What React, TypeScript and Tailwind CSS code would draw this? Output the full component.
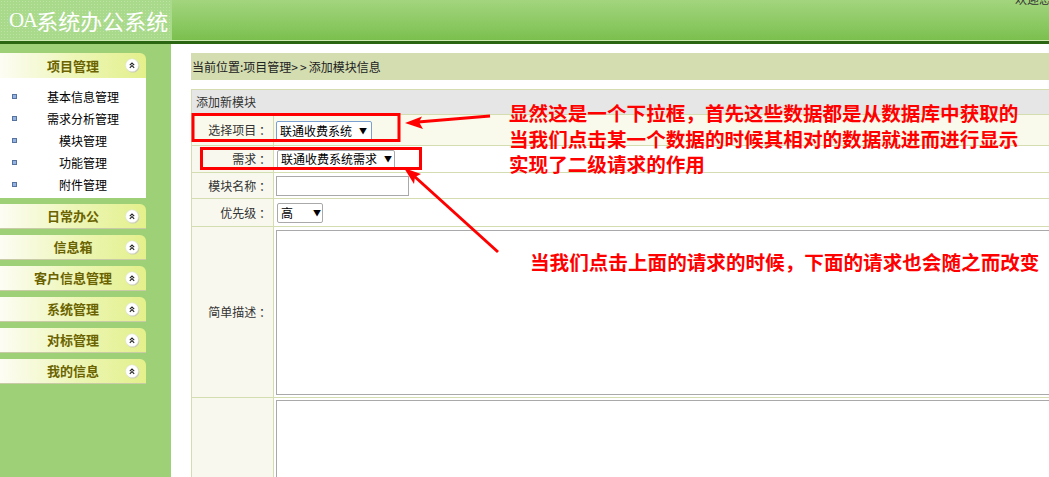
import React from 'react';

const menus = ['日常办公', '信息箱', '客户信息管理', '系统管理', '对标管理', '我的信息'];
const subItems = ['基本信息管理', '需求分析管理', '模块管理', '功能管理', '附件管理'];

const CollapseIcon = () => (
  <svg width="15" height="15" viewBox="0 0 15 15" className="absolute right-[6px] top-[5px]">
    <circle cx="7.8" cy="8" r="6.6" fill="#c9c9b8" />
    <circle cx="7" cy="7.2" r="6.4" fill="#ffffff" stroke="#e2e2d6" strokeWidth="0.6" />
    <path d="M4.8 7.2 L7 5 L9.2 7.2 M4.8 9.8 L7 7.6 L9.2 9.8" fill="none" stroke="#222" strokeWidth="1.1" />
  </svg>
);

const MenuHeader = ({ title, first }: { title: string; first?: boolean }) => (
  <div
    className={`relative flex items-center justify-center rounded-tr-[6px] bg-gradient-to-r from-[#fdfdf4] via-[#eef6b8] to-[#e3f08a] ${first ? 'h-[25px]' : 'mt-[6px] h-[25px] border-b border-[#c9cba6]'}`}
  >
    <span className="text-[13px] font-bold text-[#6a6300]">{title}</span>
    <CollapseIcon />
  </div>
);

const SelectBox = ({ text, className }: { text: string; className: string }) => (
  <div className={`flex items-center gap-[7px] rounded-[2px] border bg-white pl-[3px] text-[12px] text-black ${className}`}>
    <span>{text}</span>
    <span className="text-[8px]">▼</span>
  </div>
);

export default function App() {
  return (
    <div className="relative h-[477px] w-[1049px] overflow-hidden bg-white font-['Noto_Sans_CJK_SC',sans-serif]">
      {/* 顶部 */}
      <div className="flex h-[40px] bg-gradient-to-b from-[#a3d57e] to-[#7bc04e]">
        <div className="flex w-[172px] shrink-0 items-center whitespace-nowrap bg-[#a9d98b] bg-[radial-gradient(#bde3a2_1px,transparent_1px)] bg-[length:3px_3px] pl-[9px]">
          <span className="font-['Liberation_Serif',serif] text-[21px] leading-none tracking-[-1.5px] text-white">OA</span>
          <span className="text-[22px] leading-none text-white">系统办公系统</span>
        </div>
      </div>
      <span className="absolute left-[1015px] top-[-10px] whitespace-nowrap text-[12px] text-[#333]">欢迎您 admin</span>
      <div className="h-px bg-[#cfe9b2]" />
      <div className="h-[3px] bg-[#2b6712]" />

      <div className="flex h-[433px]">
        {/* 左侧菜单 */}
        <div className="w-[171px] shrink-0 bg-[#9dd077] pt-[9px]">
          <div className="w-[146px]">
            <MenuHeader title="项目管理" first />
            <div className="h-[120px] bg-white pt-[8px]">
              {subItems.map((item) => (
                <div key={item} className="relative flex h-[22px] items-center">
                  <span className="absolute left-[12px] top-[8px] h-[5px] w-[5px] border border-[#56729f] bg-[#94b3e2]" />
                  <span className="w-full pl-[20px] text-center text-[12px] text-black">{item}</span>
                </div>
              ))}
            </div>
            {menus.map((m) => (
              <MenuHeader key={m} title={m} />
            ))}
          </div>
        </div>

        {/* 右侧内容 */}
        <div className="min-w-0 flex-1 pl-[20px] pt-[9px]">
          <div className="flex h-[27px] items-center bg-[#d3ddb0] pl-[1px] text-[12px] text-[#222]">
            当前位置:项目管理<span className="tracking-[2px]">&gt;&gt;</span>添加模块信息
          </div>

          <div className="mt-[9px] w-[900px] border-l border-t border-[#d3ddb0] text-[12px] text-[#333]">
            <div className="flex h-[24px] items-center bg-[#e6e6e6] pl-[4px]">添加新模块</div>

            <div className="flex h-[31px] border-t border-[#d3ddb0] bg-[#fafaec]">
              <div className="flex w-[82px] items-center justify-end border-r border-[#d3ddb0] pr-[2px]">选择项目 ：</div>
              <div className="flex items-center pl-[2px] pt-[1px]">
                <SelectBox text="联通收费系统" className="h-[20px] w-[96px] border-[#7aa0d2]" />
              </div>
            </div>

            <div className="flex h-[27px] border-t border-[#d3ddb0]">
              <div className="flex w-[82px] items-center justify-end border-r border-[#d3ddb0] bg-[#f8f8ef] pr-[2px]">需求 ：</div>
              <div className="flex items-center pl-[3px]">
                <SelectBox text="联通收费系统需求" className="h-[19px] w-[118px] border-[#a9a9a9]" />
              </div>
            </div>

            <div className="flex h-[26px] border-t border-[#d3ddb0]">
              <div className="flex w-[82px] items-center justify-end border-r border-[#d3ddb0] bg-[#f8f8ef] pr-[2px]">模块名称 ：</div>
              <div className="flex items-center pl-[2px]">
                <input className="h-[20px] w-[133px] border border-[#a9a9a9] bg-white outline-none" />
              </div>
            </div>

            <div className="flex h-[28px] border-t border-[#d3ddb0]">
              <div className="flex w-[82px] items-center justify-end border-r border-[#d3ddb0] bg-[#f8f8ef] pr-[2px]">优先级 ：</div>
              <div className="flex items-center pl-[3px]">
                <SelectBox text="高" className="h-[20px] w-[46px] gap-[20px] border-[#a9a9a9]" />
              </div>
            </div>

            <div className="flex h-[171px] border-t border-[#d3ddb0]">
              <div className="flex w-[82px] items-center justify-end border-r border-[#d3ddb0] bg-[#f8f8ef] pr-[2px]">简单描述 ：</div>
              <div className="flex-1 pl-[2px] pt-[3px]">
                <textarea className="h-[165px] w-full resize-none border border-[#a9a9a9] bg-white outline-none" />
              </div>
            </div>

            <div className="flex h-[90px] border-t border-[#d3ddb0]">
              <div className="w-[82px] border-r border-[#d3ddb0] bg-[#f8f8ef]" />
              <div className="flex-1 pl-[2px] pt-[2px]">
                <textarea className="h-[120px] w-full resize-none border border-[#a9a9a9] bg-white outline-none" />
              </div>
            </div>
          </div>
        </div>
      </div>

      {/* 标注 */}
      <svg className="pointer-events-none absolute left-0 top-0" width="1049" height="477">
        <rect x="193" y="114.5" width="206" height="26" fill="none" stroke="#ff0000" strokeWidth="3" />
        <rect x="201.5" y="148.5" width="219" height="20" fill="none" stroke="#ff0000" strokeWidth="3" />
        <line x1="490" y1="116" x2="418" y2="122" stroke="#ff0000" strokeWidth="3" />
        <path d="M405 123 L422 116.5 L419 122 L423 129 Z" fill="#ff0000" />
        <line x1="498" y1="252" x2="414" y2="176" stroke="#ff0000" strokeWidth="3" />
        <path d="M404 168 L421 174 L415 177 L414 184 Z" fill="#ff0000" />
      </svg>
      <div className="absolute left-[509px] top-[100px] whitespace-nowrap text-[19.6px] font-bold leading-[25.5px] text-[#ff0000]">
        <div>显然这是一个下拉框，首先这些数据都是从数据库中获取的</div>
        <div>当我们点击某一个数据的时候其相对的数据就进而进行显示</div>
        <div>实现了二级请求的作用</div>
      </div>
      <div className="absolute left-[530px] top-[249px] whitespace-nowrap text-[19.6px] font-bold leading-[25.5px] text-[#ff0000]">
        当我们点击上面的请求的时候，下面的请求也会随之而改变
      </div>
    </div>
  );
}
